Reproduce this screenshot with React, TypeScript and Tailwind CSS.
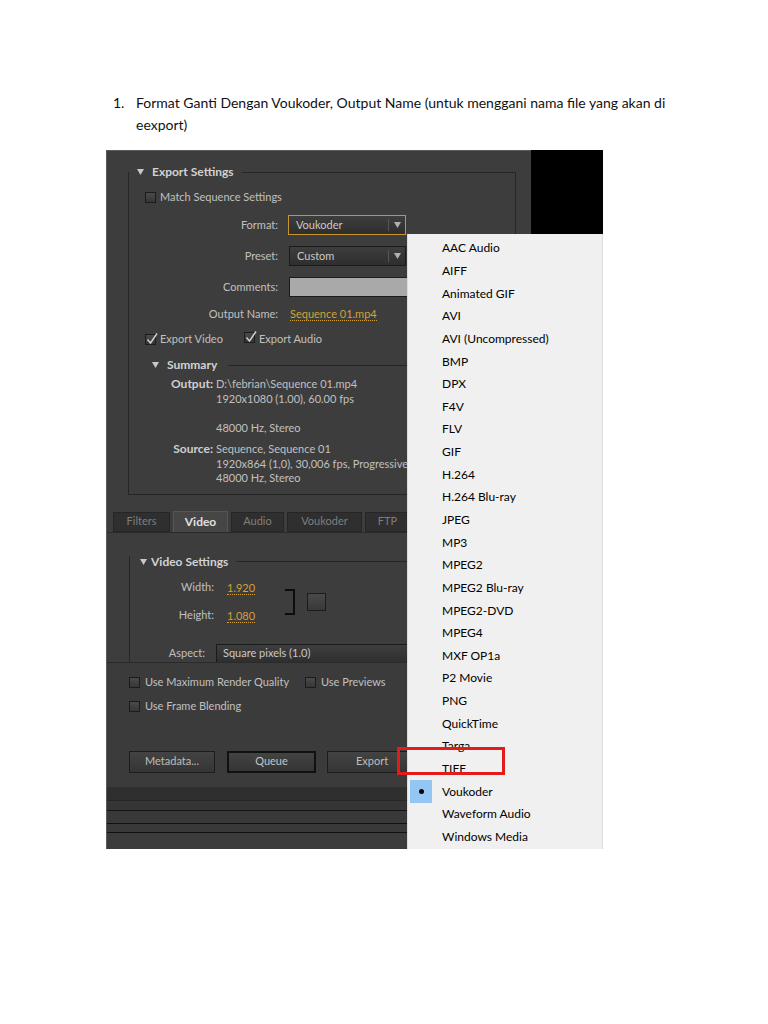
import React from "react";

const LATO = { fontFamily: 'Lato, "Open Sans", "Liberation Sans", sans-serif' };

function Tri({ color = "#c8c8c8" }: { color?: string }) {
  return (
    <svg width="7" height="6" viewBox="0 0 7 6" className="shrink-0">
      <path d="M0 0 L7 0 L3.5 6 Z" fill={color} />
    </svg>
  );
}

function Checkbox({ checked }: { checked?: boolean }) {
  return (
    <span className="relative inline-block w-[11px] h-[11px] shrink-0 border border-[#1c1c1c] bg-linear-to-b from-[#4a4a4a] to-[#363636]">
      {checked && (
        <svg className="absolute left-[0px] top-[-3px]" width="12" height="13" viewBox="0 0 12 13">
          <path d="M1.5 7.5 L4.5 11 L11 1.5" stroke="#d2d2d2" strokeWidth="1.4" fill="none" />
        </svg>
      )}
    </span>
  );
}

function Select({ text, highlight, w }: { text: string; highlight?: boolean; w: string }) {
  return (
    <div
      className={`flex items-center h-[20px] ${w} border ${
        highlight ? "border-[#c9952b]" : "border-[#1a1a1a]"
      } bg-linear-to-b from-[#3e3e3e] to-[#2e2e2e]`}
    >
      <span className="flex-1 pl-[7px] text-[#c9c9c9] truncate">{text}</span>
      <span className="w-px h-[12px] bg-[#555555]" />
      <span className="w-[16px] flex justify-center">
        <Tri color="#b0b0b0" />
      </span>
    </div>
  );
}

function GroupHeader({ title, triPad, textGap }: { title: string; triPad: string; textGap: string }) {
  return (
    <div className={`-mt-[6px] h-[12px] flex items-center ${triPad}`}>
      <Tri />
      <span className={`${textGap} text-[12px] font-bold text-[#d2d2d2] leading-none`}>{title}</span>
      <span className="flex-1 ml-[8px] h-px bg-[#262626]" />
    </div>
  );
}

const formats = [
  "AAC Audio",
  "AIFF",
  "Animated GIF",
  "AVI",
  "AVI (Uncompressed)",
  "BMP",
  "DPX",
  "F4V",
  "FLV",
  "GIF",
  "H.264",
  "H.264 Blu-ray",
  "JPEG",
  "MP3",
  "MPEG2",
  "MPEG2 Blu-ray",
  "MPEG2-DVD",
  "MPEG4",
  "MXF OP1a",
  "P2 Movie",
  "PNG",
  "QuickTime",
  "Targa",
  "TIFF",
  "Voukoder",
  "Waveform Audio",
  "Windows Media",
];

export default function App() {
  return (
    <div className="min-h-[1024px] w-[768px] bg-white" style={LATO}>
      <div className="pt-[92px] pl-[113px] flex text-[14px] leading-[22px] text-[#111111]">
        <span className="w-[23px] shrink-0">1.</span>
        <p className="w-[545px]">
          Format Ganti Dengan Voukoder, Output Name (untuk menggani nama file yang akan di eexport)
        </p>
      </div>

      <div className="relative ml-[106px] mt-[14px] w-[497px] h-[699px] flex text-[11px] text-[#c0c0c0]">
        {/* Left panel */}
        <div className="w-[425px] h-full bg-[#3d3d3d] flex flex-col border-l border-t border-[#5a5a5a]">
          {/* Export Settings group */}
          <div className="ml-[21px] mt-[21px] w-[388px] border-l border-r border-b border-[#262626] pb-[8px]">
            <GroupHeader title="Export Settings" triPad="pl-[8px]" textGap="ml-[8px]" />
            <div className="mt-[9px] h-[20px] flex items-center pl-[16px]">
              <Checkbox />
              <span className="ml-[4px]">Match Sequence Settings</span>
            </div>
            <div className="mt-[8px] h-[20px] flex items-center">
              <span className="w-[149px] text-right">Format:</span>
              <div className="ml-[10px]">
                <Select text="Voukoder" highlight w="w-[118px]" />
              </div>
            </div>
            <div className="mt-[11px] h-[20px] flex items-center">
              <span className="w-[149px] text-right">Preset:</span>
              <div className="ml-[11px]">
                <Select text="Custom" w="w-[117px]" />
              </div>
            </div>
            <div className="mt-[11px] h-[20px] flex items-center">
              <span className="w-[149px] text-right">Comments:</span>
              <div className="ml-[11px] w-[200px] h-[20px] bg-[#a9a9a9] border border-[#1c1c1c]" />
            </div>
            <div className="mt-[7px] h-[20px] flex items-center">
              <span className="w-[149px] text-right">Output Name:</span>
              <span className="ml-[12px] text-[#d4a03a] border-b border-dotted border-[#d4a03a] leading-[13px]">
                Sequence 01.mp4
              </span>
            </div>
            <div className="mt-[5px] h-[20px] flex items-center pl-[16px]">
              <Checkbox checked />
              <span className="ml-[4px]">Export Video</span>
              <span className="ml-[21px]">
                <Checkbox checked />
              </span>
              <span className="ml-[4px]">Export Audio</span>
            </div>
            <div className="mt-[9px] h-[14px] flex items-center pl-[23px] pr-[8px]">
              <Tri />
              <span className="ml-[8px] text-[12px] font-bold text-[#d2d2d2]">Summary</span>
              <span className="flex-1 ml-[11px] h-px bg-[#262626]" />
            </div>
            <div className="mt-[5px] flex leading-[14.5px]">
              <span className="w-[84px] text-right text-[12px] font-bold text-[#cfcfcf]">Output:</span>
              <div className="ml-[3px] whitespace-nowrap">
                <div>D:\febrian\Sequence 01.mp4</div>
                <div>1920x1080 (1.00), 60.00 fps</div>
                <div>&nbsp;</div>
                <div>48000 Hz, Stereo</div>
              </div>
            </div>
            <div className="mt-[7px] flex leading-[14.5px]">
              <span className="w-[84px] text-right text-[12px] font-bold text-[#cfcfcf]">Source:</span>
              <div className="ml-[3px] whitespace-nowrap">
                <div>Sequence, Sequence 01</div>
                <div>1920x864 (1,0), 30,006 fps, Progressive</div>
                <div>48000 Hz, Stereo</div>
              </div>
            </div>
          </div>

          {/* Tabs */}
          <div className="mt-[17px] ml-[6px] h-[20px] flex gap-[3px] items-end">
            <div className="w-[57px] h-[20px] flex items-center justify-center bg-[#2f2f2f] border border-[#262626] text-[#7e7e7e]">
              Filters
            </div>
            <div className="w-[55px] h-[21px] flex items-center justify-center bg-[#464646] border-t border-l border-r border-[#555555] text-[12px] text-[#e0e0e0] font-bold">
              Video
            </div>
            <div className="w-[53px] h-[20px] flex items-center justify-center bg-[#2f2f2f] border border-[#262626] text-[#7e7e7e]">
              Audio
            </div>
            <div className="w-[75px] h-[20px] flex items-center justify-center bg-[#2f2f2f] border border-[#262626] text-[#7e7e7e]">
              Voukoder
            </div>
            <div className="w-[45px] h-[20px] flex items-center justify-center bg-[#2f2f2f] border border-[#262626] text-[#7e7e7e]">
              FTP
            </div>
          </div>

          {/* Scroll area */}
          <div className="h-[130px] overflow-hidden border-t border-[#2a2a2a] bg-[#3d3d3d]">
            <div className="ml-[22px] mt-[29px] w-[388px] border-l border-r border-[#262626]">
              <GroupHeader title="Video Settings" triPad="pl-[10px]" textGap="ml-[4px]" />
              <div className="mt-[10px] flex items-center">
                <div className="w-[140px]">
                  <div className="h-[20px] flex items-center">
                    <span className="w-[84px] text-right">Width:</span>
                    <span className="ml-[13px] text-[#d4a03a] border-b border-dotted border-[#d4a03a] leading-[13px]">
                      1.920
                    </span>
                  </div>
                  <div className="mt-[8px] h-[20px] flex items-center">
                    <span className="w-[84px] text-right">Height:</span>
                    <span className="ml-[13px] text-[#d4a03a] border-b border-dotted border-[#d4a03a] leading-[13px]">
                      1.080
                    </span>
                  </div>
                </div>
                <svg width="11" height="26" viewBox="0 0 11 26" className="ml-[15px]">
                  <path d="M0 1 L9 1 L9 25 L0 25" stroke="#0d0d0d" strokeWidth="2" fill="none" />
                </svg>
                <div className="ml-[11px] w-[19px] h-[18px] border border-[#1c1c1c] bg-linear-to-b from-[#4a4a4a] to-[#383838]" />
              </div>
              <div className="mt-[18px] h-[20px] flex items-center">
                <span className="w-[75px] text-right">Aspect:</span>
                <div className="ml-[11px] w-[260px] h-[20px] border border-[#1a1a1a] bg-linear-to-b from-[#3e3e3e] to-[#2e2e2e] flex items-center pl-[6px] text-[#c9c9c9]">
                  Square pixels (1.0)
                </div>
              </div>
            </div>
          </div>

          {/* Bottom options */}
          <div className="h-[125px] border-t border-[#2a2a2a] bg-[#3b3b3b] pl-[22px] pt-[10px]">
            <div className="h-[20px] flex items-center">
              <div className="w-[176px] flex items-center">
                <Checkbox />
                <span className="ml-[5px]">Use Maximum Render Quality</span>
              </div>
              <Checkbox />
              <span className="ml-[5px]">Use Previews</span>
            </div>
            <div className="mt-[4px] h-[20px] flex items-center">
              <Checkbox />
              <span className="ml-[5px]">Use Frame Blending</span>
            </div>
            <div className="mt-[34px] flex items-center">
              <div className="w-[86px] h-[22px] flex items-center justify-center border border-[#1c1c1c] bg-linear-to-b from-[#434343] to-[#353535] text-[#bdbdbd]">
                Metadata...
              </div>
              <div className="ml-[12px] w-[89px] h-[22px] flex items-center justify-center border-2 border-[#111111] bg-linear-to-b from-[#434343] to-[#353535] text-[#c4c4c4]">
                Queue
              </div>
              <div className="ml-[11px] w-[90px] h-[22px] flex items-center justify-center border border-[#1c1c1c] bg-linear-to-b from-[#434343] to-[#353535] text-[#bdbdbd]">
                Export
              </div>
            </div>
          </div>

          {/* Bottom strips */}
          <div className="flex-1 flex flex-col">
            <div className="h-[13px] bg-[#2f2f2f]" />
            <div className="h-px bg-[#262626]" />
            <div className="h-[9px] bg-[#353535]" />
            <div className="h-px bg-[#151515]" />
            <div className="h-[12px] bg-[#393939]" />
            <div className="h-px bg-[#111111]" />
            <div className="h-[8px] bg-[#393939]" />
            <div className="h-px bg-[#111111]" />
            <div className="flex-1 bg-[#3b3b3b]" />
          </div>
        </div>

        {/* Right black area */}
        <div className="flex-1 bg-black" />

        {/* Dropdown menu */}
        <div
          className="absolute left-[301px] top-[84px] w-[196px] bottom-0 bg-[#f0f0f0] border-l border-[#8a8a8a] border-r border-[#dcdcdc] pt-[3px] text-[12px] text-black"
          style={LATO}
        >
          {formats.map((f) => (
            <div key={f} className="relative h-[22.65px] flex items-center pl-[34px]">
              {f === "Voukoder" && (
                <span className="absolute left-[2px] top-0 w-[22px] h-full bg-[#93c6f2] flex items-center justify-center">
                  <span className="w-[5px] h-[5px] rounded-full bg-black" />
                </span>
              )}
              {f}
            </div>
          ))}
        </div>

        {/* Red highlight */}
        <div className="absolute left-[291px] top-[597px] w-[108px] h-[28px] border-[3px] border-[#e41b1b]" />
      </div>
    </div>
  );
}
